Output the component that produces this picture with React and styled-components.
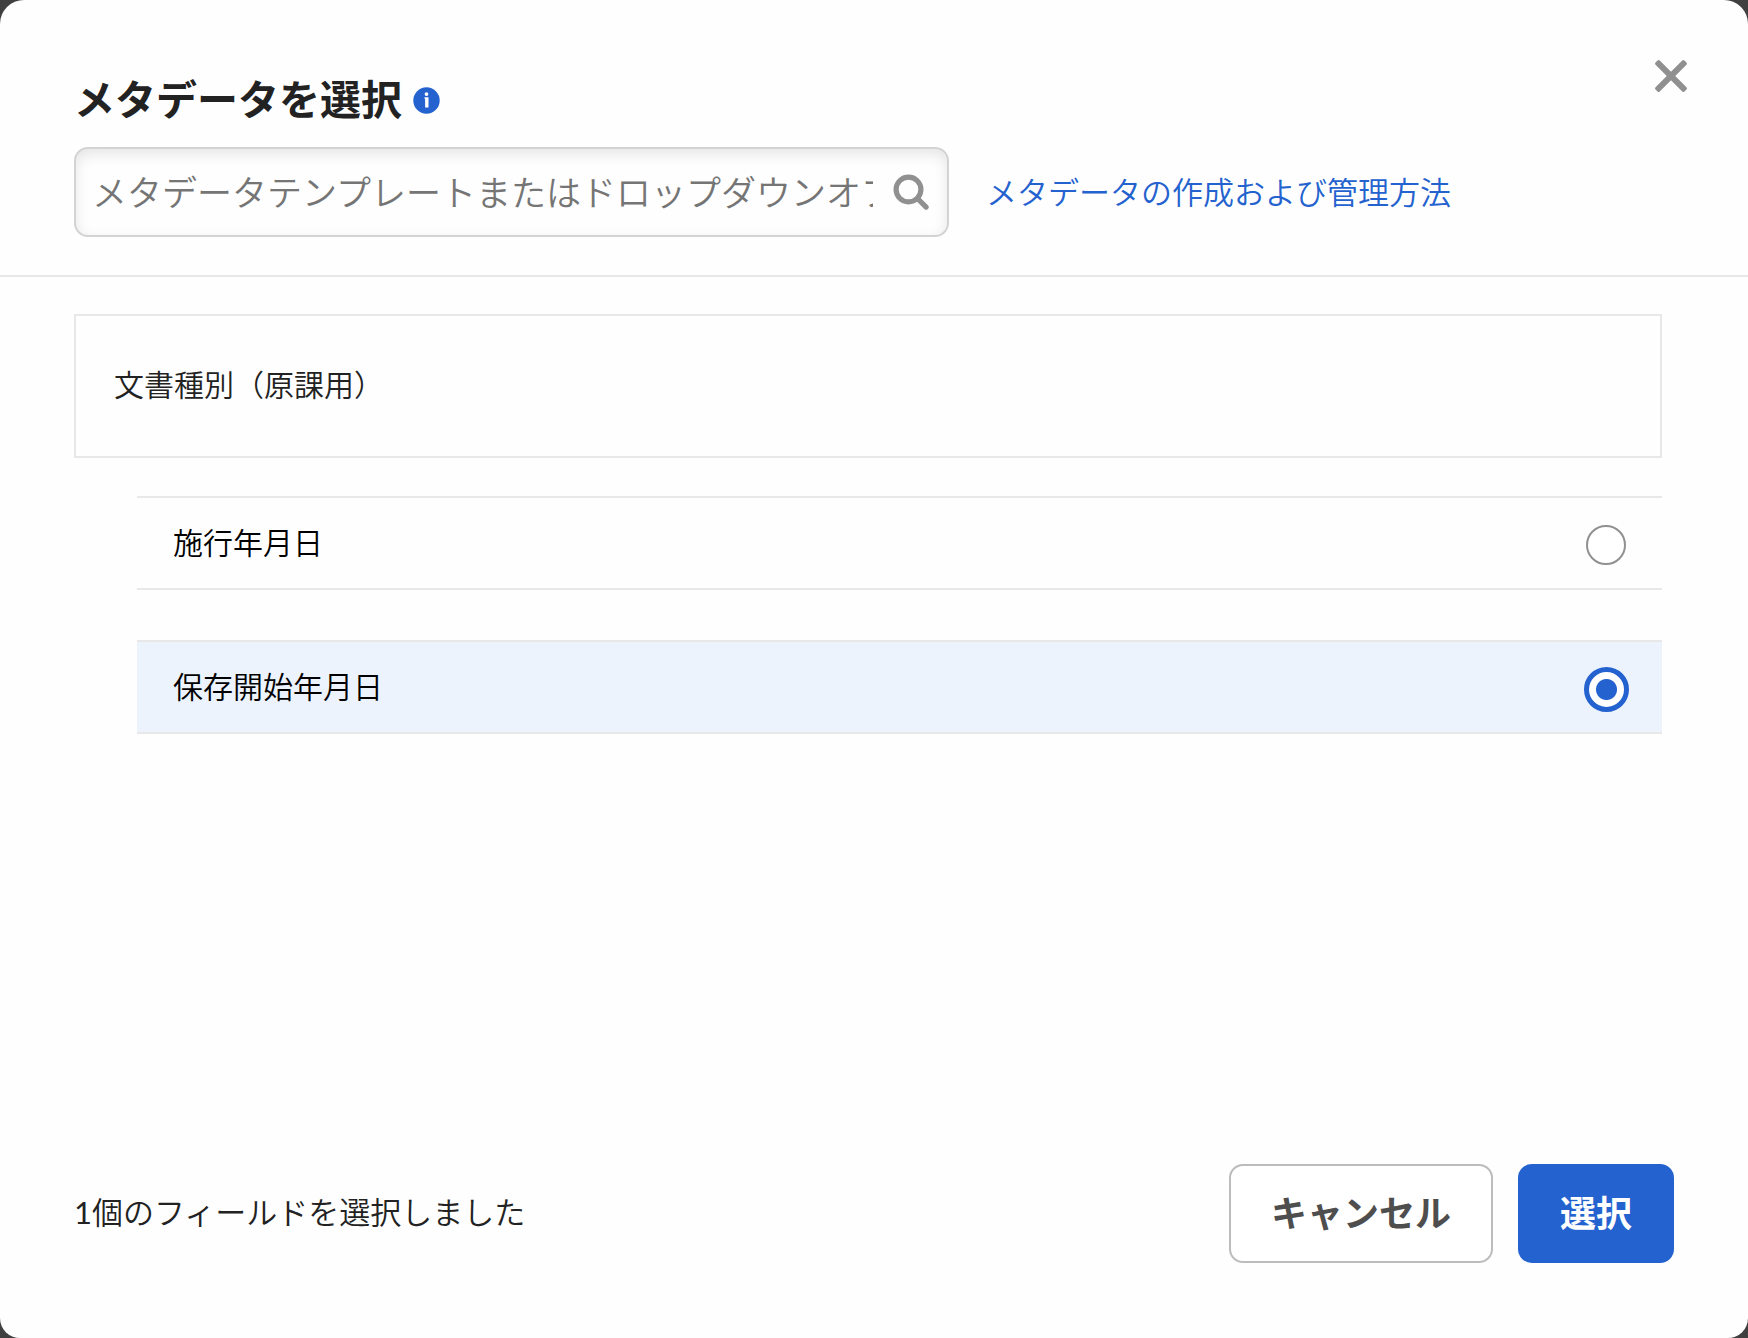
import { useState } from 'react';
import styled, { createGlobalStyle } from 'styled-components';

const GlobalStyle = createGlobalStyle`
  * {
    box-sizing: border-box;
  }

  body {
    margin: 0;
    background: #3f3f3f;
    color: #222;
    font-family: Lato, "Noto Sans CJK JP", sans-serif;
    font-size: 31px;
    font-weight: 350;
    line-height: 46px;
  }

  button, input {
    font-family: inherit;
    font-weight: inherit;
  }
`

const Modal = styled.div`
  display: flex;
  flex-direction: column;
  min-height: 100vh;
  background: #fefefe;
  border-radius: 24px 24px 20px 20px;
`

const Header = styled.header`
  display: flex;
  align-items: flex-start;
  justify-content: space-between;
  padding: 52px 53px 38px 74px;
  border-bottom: 2px solid #e8e8e8;
`

const HeaderMain = styled.div`
  flex: 1;
  min-width: 0;
`

const TitleRow = styled.div`
  display: flex;
  align-items: center;
  gap: 11px;
  padding-top: 18px;
`

const Title = styled.h1`
  margin: 0;
  font-size: 41px;
  line-height: 60px;
  font-weight: 600;
`

const SearchRow = styled.div`
  display: flex;
  align-items: center;
  gap: 37px;
  margin-top: 17px;
`

const SearchBox = styled.div`
  display: flex;
  align-items: center;
  gap: 20px;
  width: 875px;
  height: 90px;
  padding: 0 18px 0 16px;
  background: #fefefe;
  border: 2px solid #d3d3d3;
  border-radius: 14px;
  box-shadow: inset 0 5px 14px rgba(0, 0, 0, 0.1);
`

const SearchInput = styled.input`
  flex: 1;
  min-width: 0;
  height: 52px;
  padding: 0;
  border: 0;
  outline: 0;
  background: transparent;
  color: #222;
  font-size: 35px;
  &::placeholder {
    color: #757575;
    opacity: 1;
  }
`

const IconButton = styled.button`
  display: flex;
  padding: 0;
  border: 0;
  background: transparent;
  color: #909090;
  cursor: pointer;
`

const CloseButton = styled(IconButton)`
  padding: 5px;
`

const HelpLink = styled.a`
  color: #2462cf;
  text-decoration: none;
  white-space: nowrap;
`

const Content = styled.main`
  flex: 1;
  padding: 37px 86px 37px 74px;
  font-size: 30px;
`

const Template = styled.div`
  display: flex;
  align-items: center;
  height: 144px;
  padding: 0 38px 4px;
  border: 2px solid #e8e8e8;
`

const FieldList = styled.div`
  display: flex;
  flex-direction: column;
  gap: 50px;
  margin: 38px 0 0 63px;
`

const Field = styled.label`
  display: flex;
  align-items: center;
  justify-content: space-between;
  height: 94px;
  padding: 0 36px 2px;
  border-top: 2px solid #e8e8e8;
  border-bottom: 2px solid #e8e8e8;
  background: ${(props) => (props.$selected ? '#ecf3fc' : 'transparent')};
  color: #000;
  cursor: pointer;
`

const Radio = styled.input`
  appearance: none;
  width: 40px;
  height: 40px;
  margin: 6px 0 0;
  border: 2px solid #909090;
  border-radius: 50%;
  background: #fff;
  cursor: pointer;
  &:checked {
    width: 45px;
    height: 45px;
    margin-right: -3px;
    border: 5px solid #2462cf;
    background: radial-gradient(circle, #2462cf 10px, #fff 11px);
  }
`

const Footer = styled.footer`
  display: flex;
  align-items: center;
  justify-content: space-between;
  padding: 0 74px 75px;
`

const Status = styled.span`
  padding-bottom: 4px;
`

const Count = styled.span`
  font-weight: 400;
`

const Actions = styled.div`
  display: flex;
  gap: 25px;
`

const Button = styled.button`
  height: 99px;
  padding: 0 40px 6px;
  border: 2px solid ${(props) => (props.$primary ? '#2462cf' : '#bcbcbc')};
  border-radius: 14px;
  background: ${(props) => (props.$primary ? '#2462cf' : '#fff')};
  color: ${(props) => (props.$primary ? '#fff' : '#4e4e4e')};
  font-size: 36px;
  font-weight: 600;
  cursor: pointer;
`

const InfoIcon = () => (
  <svg width="27" height="27" viewBox="0 0 27 27" role="img" aria-label="情報">
    <circle cx="13.5" cy="13.5" r="13.2" fill="#2462cf" />
    <circle cx="13.5" cy="7.1" r="1.9" fill="#fff" />
    <path d="M11.5 10.2h4v10.2h-3.4v-8.6h-0.6z" fill="#fff" />
  </svg>
)

const SearchIcon = () => (
  <svg width="36" height="36" viewBox="0 0 36 36" fill="none" stroke="currentColor" aria-hidden="true">
    <circle cx="15.5" cy="15.5" r="12.4" strokeWidth="5.2" />
    <path d="M24.5 24.5l8.6 8.6" strokeWidth="5.2" strokeLinecap="round" />
  </svg>
)

// each bar is a rounded rect turned by 45 degrees
const CloseIcon = () => (
  <svg width="38" height="38" viewBox="0 0 38 38" fill="currentColor" aria-hidden="true">
    <rect x="-1.5" y="16" width="41" height="6" rx="1.6" transform="rotate(45 19 19)" />
    <rect x="-1.5" y="16" width="41" height="6" rx="1.6" transform="rotate(-45 19 19)" />
  </svg>
)

const fields = ['施行年月日', '保存開始年月日'];

const App = () => {
  const [query, setQuery] = useState('');
  const [selected, setSelected] = useState('保存開始年月日');

  return (
    <>
      <GlobalStyle />
      <Modal role="dialog" aria-labelledby="title" lang="ja">
        <Header>
          <HeaderMain>
            <TitleRow>
              <Title id="title">メタデータを選択</Title>
              <InfoIcon />
            </TitleRow>
            <SearchRow>
              <SearchBox>
                <SearchInput
                  type="text"
                  aria-label="検索"
                  placeholder="メタデータテンプレートまたはドロップダウンオプションを検索"
                  value={query}
                  onChange={(e) => setQuery(e.target.value)}
                />
                <IconButton type="button" aria-label="検索">
                  <SearchIcon />
                </IconButton>
              </SearchBox>
              <HelpLink href="#help">メタデータの作成および管理方法</HelpLink>
            </SearchRow>
          </HeaderMain>
          <CloseButton type="button" aria-label="閉じる">
            <CloseIcon />
          </CloseButton>
        </Header>
        <Content>
          <Template>文書種別（原課用）</Template>
          <FieldList>
            {fields.map((field) => (
              <Field key={field} $selected={field === selected}>
                {field}
                <Radio
                  type="radio"
                  name="field"
                  checked={field === selected}
                  onChange={() => setSelected(field)}
                />
              </Field>
            ))}
          </FieldList>
        </Content>
        <Footer>
          <Status><Count>1</Count>個のフィールドを選択しました</Status>
          <Actions>
            <Button type="button">キャンセル</Button>
            <Button type="button" $primary>選択</Button>
          </Actions>
        </Footer>
      </Modal>
    </>
  );
};

export default App;
